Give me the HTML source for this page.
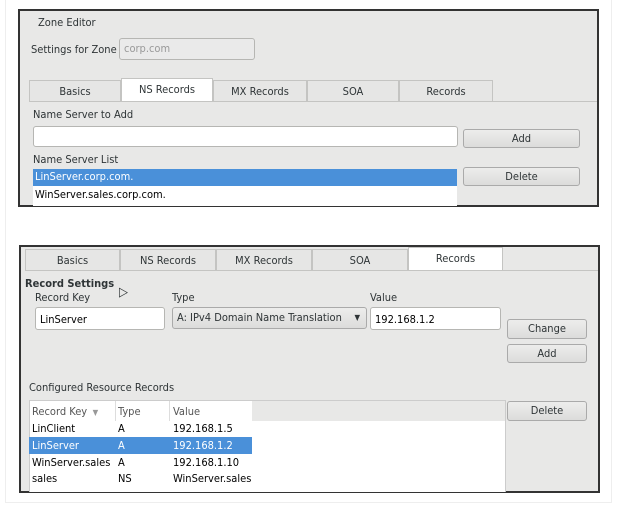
<!DOCTYPE html><html><head><style>
body{margin:0;width:620px;height:508px;background:#fff;position:relative;font-family:"DejaVu Sans Condensed","Liberation Sans",sans-serif;font-size:11px;color:#2e3436;overflow:hidden}
div,span{position:absolute;box-sizing:border-box}
.f{background:#e8e8e7;border:2px solid #333}
.in{background:#fff;border:1px solid #b6b6b3;border-radius:3px;padding:3px 4px}
.btn{background:linear-gradient(#ededec,#dcdcdb);border:1px solid #aaa;border-radius:3px;text-align:center;line-height:17px}
.tab{background:#e6e6e5;border:1px solid #c4c4c2;text-align:center;line-height:21px;border-bottom:none}
.tab.a{background:#fff}
.sel{background:#4a90d9;color:#fff}
</style></head><body>
<div style="left:5px;top:0;width:607px;height:503px;border:1px solid #eee;border-top:none"></div>
<div class="f" style="left:18px;top:9px;width:581px;height:198px"></div>
<span style="left:38px;top:16px">Zone Editor</span>
<span style="left:31px;top:43px">Settings for Zone</span>
<div class="in" style="left:119px;top:38px;width:136px;height:22px;background:#eaeaea;color:#999">corp.com</div>
<div class="tab" style="left:29px;top:80px;width:92px;height:22px">Basics</div>
<div class="tab a" style="left:121px;top:78px;width:92px;height:24px">NS Records</div>
<div class="tab" style="left:213px;top:80px;width:94px;height:22px">MX Records</div>
<div class="tab" style="left:307px;top:80px;width:92px;height:22px">SOA</div>
<div class="tab" style="left:399px;top:80px;width:94px;height:22px">Records</div>
<div style="left:29px;top:101px;width:568px;height:1px;background:#c4c4c2"></div>
<span style="left:33px;top:108px">Name Server to Add</span>
<div class="in" style="left:33px;top:126px;width:425px;height:21px"></div>
<div class="btn" style="left:463px;top:129px;width:117px;height:19px">Add</div>
<span style="left:33px;top:153px">Name Server List</span>
<div style="left:33px;top:169px;width:424px;height:37px;background:#fff"></div>
<div class="sel" style="left:33px;top:169px;width:424px;height:17px;padding:1px 2px">LinServer.corp.com.</div>
<span style="left:35px;top:188px;color:#000">WinServer.sales.corp.com.</span>
<div class="btn" style="left:463px;top:167px;width:117px;height:19px">Delete</div>

<div class="f" style="left:19px;top:245px;width:581px;height:248px"></div>
<div class="tab" style="left:25px;top:249px;width:95px;height:22px">Basics</div>
<div class="tab" style="left:120px;top:249px;width:96px;height:22px">NS Records</div>
<div class="tab" style="left:216px;top:249px;width:96px;height:22px">MX Records</div>
<div class="tab" style="left:312px;top:249px;width:96px;height:22px">SOA</div>
<div class="tab a" style="left:408px;top:247px;width:95px;height:24px">Records</div>
<div style="left:25px;top:270px;width:573px;height:1px;background:#c4c4c2"></div>
<span style="left:25px;top:277px;font-weight:bold">Record Settings</span>
<span style="left:119px;top:285px;font-size:13px">&#9655;</span>
<span style="left:35px;top:291px">Record Key</span>
<span style="left:172px;top:291px">Type</span>
<span style="left:370px;top:291px">Value</span>
<div class="in" style="left:35px;top:307px;width:130px;height:23px;color:#000;padding-top:5px">LinServer</div>
<div class="btn" style="left:172px;top:307px;width:195px;height:22px;text-align:left;padding-left:4px;line-height:20px">A: IPv4 Domain Name Translation<span style="right:6px;top:0;font-size:8px">&#9660;</span></div>
<div class="in" style="left:370px;top:307px;width:131px;height:23px;color:#000;padding-top:5px">192.168.1.2</div>
<div class="btn" style="left:507px;top:319px;width:80px;height:20px">Change</div>
<div class="btn" style="left:507px;top:344px;width:80px;height:19px">Add</div>
<span style="left:29px;top:381px">Configured Resource Records</span>
<div style="left:29px;top:400px;width:477px;height:92px;background:#fff;border:1px solid #ccc;border-bottom:none"></div>
<div style="left:252px;top:401px;width:253px;height:20px;background:#e8e8e7"></div>
<span style="left:32px;top:405px;color:#555">Record Key <span style="position:static;font-size:8px;color:#999">&nbsp;&#9660;</span></span>
<span style="left:118px;top:405px;color:#555">Type</span>
<span style="left:173px;top:405px;color:#555">Value</span>
<div style="left:115px;top:401px;width:1px;height:20px;background:#ddd"></div>
<div style="left:169px;top:401px;width:1px;height:20px;background:#ddd"></div>
<div class="sel" style="left:29px;top:437px;width:223px;height:17px"></div>
<span style="left:32px;top:422px;color:#000">LinClient</span><span style="left:118px;top:422px;color:#000">A</span><span style="left:173px;top:422px;color:#000">192.168.1.5</span>
<span style="left:32px;top:439px;color:#fff">LinServer</span><span style="left:118px;top:439px;color:#fff">A</span><span style="left:173px;top:439px;color:#fff">192.168.1.2</span>
<span style="left:32px;top:456px;color:#000">WinServer.sales</span><span style="left:118px;top:456px;color:#000">A</span><span style="left:173px;top:456px;color:#000">192.168.1.10</span>
<span style="left:32px;top:472px;color:#000">sales</span><span style="left:118px;top:472px;color:#000">NS</span><span style="left:173px;top:472px;color:#000">WinServer.sales</span>
<div class="btn" style="left:507px;top:401px;width:80px;height:20px">Delete</div>
</body></html>
